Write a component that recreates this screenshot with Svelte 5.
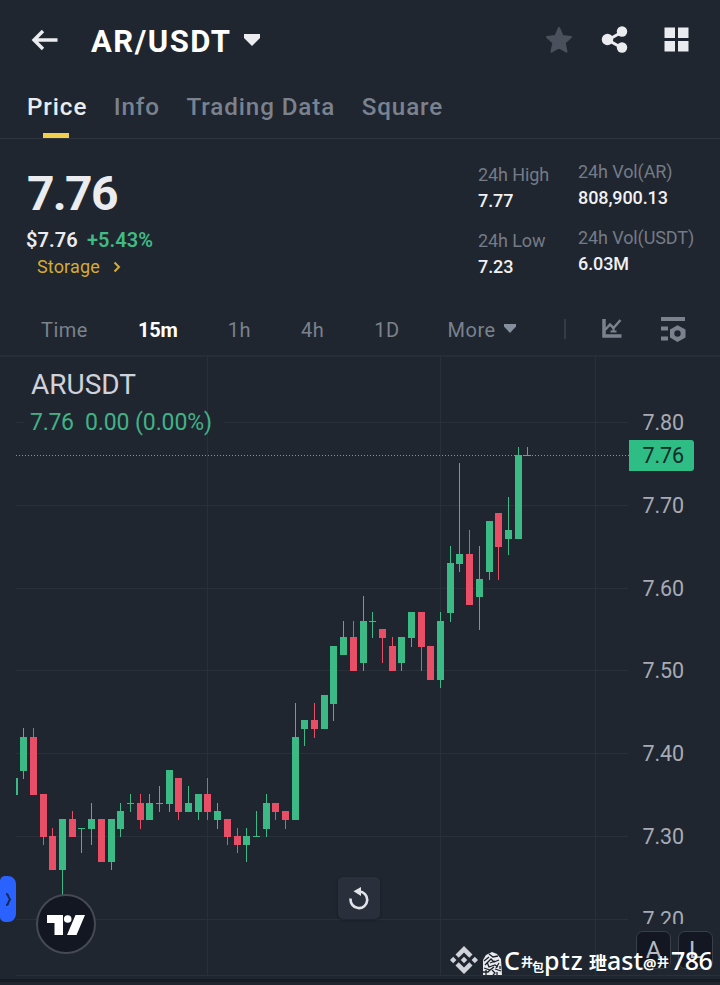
<script lang="ts">
  type Candle = [open: number, high: number, low: number, close: number];

  const tabs = ['Price', 'Info', 'Trading Data', 'Square'];
  const intervals = ['Time', '15m', '1h', '4h', '1D'];

  let activeTab = $state('Price');
  let activeInterval = $state('15m');

  const stats = [
    [
      { label: '24h High', value: '7.77' },
      { label: '24h Low', value: '7.23' },
    ],
    [
      { label: '24h Vol(AR)', value: '808,900.13' },
      { label: '24h Vol(USDT)', value: '6.03M' },
    ],
  ];

  // prices in cents
  const candles: Candle[] = [
    [735, 737, 735, 737], [738, 743, 737, 742], [742, 743, 735, 735], [735, 735, 729, 730],
    [730, 731, 726, 726], [726, 732, 723, 732], [732, 733, 730, 730], [731, 731, 728, 731],
    [731, 734, 729, 732], [732, 732, 727, 727], [727, 732, 726, 732], [731, 734, 730, 733],
    [734, 735, 733, 734], [734, 735, 731, 732], [732, 735, 732, 734], [734, 736, 733, 734],
    [734, 738, 733, 738], [737, 737, 732, 733], [733, 736, 733, 734], [733, 735, 732, 735],
    [735, 737, 732, 733], [732, 734, 731, 733], [732, 732, 729, 730], [730, 731, 728, 729],
    [729, 731, 727, 730], [730, 733, 730, 730], [731, 735, 730, 734], [734, 734, 732, 733],
    [733, 733, 731, 732], [732, 746, 732, 742], [743, 744, 741, 744], [744, 746, 742, 743],
    [743, 747, 743, 747], [746, 753, 744, 753], [752, 756, 752, 754], [754, 756, 750, 750],
    [751, 759, 750, 756], [756, 757, 754, 756], [755, 755, 751, 754], [753, 754, 750, 750],
    [751, 754, 750, 754], [754, 757, 753, 757], [757, 757, 750, 753], [753, 753, 749, 749],
    [749, 757, 748, 756], [757, 765, 756, 763], [763, 775, 762, 764], [764, 767, 758, 758],
    [759, 765, 755, 761], [762, 768, 761, 768], [769, 769, 761, 765], [766, 771, 764, 767],
    [766, 777, 766, 776], [776, 777, 776, 776],
  ];

  const gridPrices = [780, 770, 760, 750, 740, 730, 720];
  const timeLines = [207.5, 440.5, 595.5];

  // the chart starts at y = 357 on the page
  const yOf = (p: number) => Math.round(65.05 + (780 - p) * 8.276);

  const bars = candles.map(([open, high, low, close], i) => {
    const x = Math.round(13.6 + i * 9.692);
    const top = yOf(Math.max(open, close));
    const bottom = yOf(Math.min(open, close));
    return {
      x,
      top,
      height: bottom - top + 1,
      high: yOf(high),
      low: yOf(low) + (low < Math.min(open, close) ? 1 : 0),
      up: close >= open,
      doji: open === close,
    };
  });
</script>

<div class="screen">
  <header>
    <svg class="back" width="28" height="22" viewBox="0 0 28 22" fill="none" stroke="#eaecef" stroke-width="3.400">
      <path d="M12 2 3 11l9 9M3 11h23.500" />
    </svg>
    <h1>AR/USDT</h1>
    <svg class="caret" width="18" height="14" viewBox="0 0 18 14">
      <path d="M1 1h16v4L9 13 1 5z" fill="#eaecef" />
    </svg>
    <div class="actions">
      <svg width="28" height="28" viewBox="0 0 28 28">
        <path d="M14 2l3.500 8 8.500 1-6.300 5.800 1.800 8.900L14 21.400l-7.500 4.300 1.800-8.900L2 11l8.500-1z" fill="#4b515c" stroke="#4b515c" stroke-width="2" stroke-linejoin="round" />
      </svg>
      <svg width="28" height="28" viewBox="0 0 28 28" fill="#eaecef">
        <path d="M21 6 7 14l14 8" fill="none" stroke="#eaecef" stroke-width="3" />
        <circle cx="21" cy="5.500" r="5.200" />
        <circle cx="6.500" cy="13.500" r="5.700" />
        <circle cx="21" cy="21.500" r="5.200" />
      </svg>
      <svg width="26" height="26" viewBox="0 0 26 26" fill="#eaecef">
        <path d="M.5.500H11V11H.500zM14 .5h10.500V11H14zM.5 14H11v10.500H.500zM14 14h10.500v10.500H14z" />
      </svg>
    </div>
  </header>

  <nav class="tabs">
    {#each tabs as tab}
      <button class:active={activeTab === tab} onclick={() => (activeTab = tab)}>{tab}</button>
    {/each}
  </nav>

  <section class="summary">
    <div class="quote">
      <div class="price">7.76</div>
      <div class="change"><span>$7.76</span><span class="up">+5.43%</span></div>
      <div class="tag">
        <span>Storage</span>
        <svg width="8" height="12" viewBox="0 0 8 12" fill="none" stroke="#d5ab35" stroke-width="2">
          <path d="M1.500 1.500 6 6l-4.500 4.500" />
        </svg>
      </div>
    </div>
    {#each stats as column}
      <dl>
        {#each column as stat}
          <dt>{stat.label}</dt>
          <dd>{stat.value}</dd>
        {/each}
      </dl>
    {/each}
  </section>

  <nav class="intervals">
    {#each intervals as interval}
      <button class:active={activeInterval === interval} onclick={() => (activeInterval = interval)}>{interval}</button>
    {/each}
    <button class="more">
      More
      <svg width="12" height="9" viewBox="0 0 12 9"><path d="M0 0h12v2.500L6 9 0 2.500z" fill="#848e9c" /></svg>
    </button>
    <i class="divider"></i>
    <svg class="draw" width="22" height="22" viewBox="0 0 22 22" fill="none" stroke="#7b828d">
      <path d="M3 1v17h17.500" stroke-width="3.500" />
      <path d="M4 12l5-5.500 3.500 3.500 7-8" stroke-width="2.500" />
      <path d="M12.500 9v5M9.500 13.500h6" stroke-width="2" />
    </svg>
    <svg class="settings" width="26" height="26" viewBox="0 0 26 26" fill="#7b828d">
      <path d="M1 1h24v4H1zM1 10.500h7v4H1zM1 20.500h7v4H1z" />
      <path fill-rule="evenodd" d="M17.500 9.300l8 4.200v8l-8 4.500-7.500-4.500v-8zM17.500 14.300a3.200 3.200 0 1 0 0 6.400 3.200 3.200 0 0 0 0-6.400z" />
    </svg>
  </nav>

  <main>
    <svg class="chart" width="720" height="628" viewBox="0 0 720 628">
      <defs>
        <clipPath id="pane"><rect x="16" y="0" width="614" height="618" /></clipPath>
        <clipPath id="axis"><rect x="630" y="0" width="90" height="567" /></clipPath>
      </defs>
      <g class="grid">
        {#each gridPrices as p}
          <path d="M16 {yOf(p) + 0.5}H628" />
        {/each}
        {#each timeLines as x}
          <path d="M{x} 0V618" />
        {/each}
        <path d="M16 618.500H720" />
      </g>
      <rect class="legend-bg" x="24" y="52" width="200" height="26" />
      <path d="M207.500 50v30" class="grid-line" />

      <path class="last-line" d="M16 98.500H629" />
      <g clip-path="url(#pane)" shape-rendering="crispEdges">
        {#each bars as bar}
          <g class={bar.up ? 'up' : 'down'}>
            <rect x={bar.x} y={bar.high} width="1" height={bar.low - bar.high} />
            <rect x={bar.x - 3} y={bar.top} width="7" height={bar.doji ? 1 : bar.height} />
          </g>
        {/each}
      </g>

      <text class="symbol" x="31" y="37" textLength="105">ARUSDT</text>
      <text class="legend" x="30" y="73" textLength="44">7.76</text>
      <text class="legend" x="85" y="73" textLength="127">0.00 (0.00%)</text>

      <g class="axis" clip-path="url(#axis)">
        {#each gridPrices as p}
          <text x="642.5" y={yOf(p) + 7.5} textLength="41.500">{(p / 100).toFixed(2)}</text>
        {/each}
      </g>
      <path d="M629 83h62a3 3 0 0 1 3 3v25a3 3 0 0 1-3 3h-62z" fill="#2ebd85" />
      <text class="last" x="642.5" y="106" textLength="41.500">7.76</text>
      <path d="M0 623.500H720" stroke="#171c24" stroke-width="3" />
    </svg>

    <button class="drawer" aria-label="Expand">
      <svg width="7" height="13" viewBox="0 0 7 13" fill="none" stroke="#14295c" stroke-width="2"><path d="M1 1q2 0 2.500 3L5 6.500 3.500 9Q3 12 1 12" /></svg>
    </button>
    <div class="tv">
      <svg width="38" height="20" viewBox="0 0 38 20" fill="#fff">
        <path d="M0 0h16v20H7.500V8H0zM28.500 0H38l-8.500 20H20z" />
        <circle cx="20.700" cy="4" r="3.800" />
      </svg>
    </div>
    <button class="reset" aria-label="Reset chart">
      <svg width="20" height="24" viewBox="0 0 20 24">
        <path d="M1.700 12.500A8.300 8.300 0 1 0 10 5.500" fill="none" stroke="#e0e3e9" stroke-width="2.600" />
        <path d="M4.500 5.300 12 1v9z" fill="#e0e3e9" />
      </svg>
    </button>
    <div class="scale"><button>A</button><button>L</button></div>

    <div class="watermark">
      <svg class="mark" width="28" height="28" viewBox="0 0 28 28" fill="#d0d3da">
        <path d="M14 0l8.500 8.500-3.200 3.200L14 6.400l-5.300 5.300-3.200-3.200zM14 28l8.500-8.500-3.200-3.200L14 21.600l-5.300-5.300-3.200 3.200zM3.200 10.800 6.400 14l-3.200 3.200L0 14zM24.800 10.800 28 14l-3.200 3.200L21.600 14zM14 10.800l3.200 3.200-3.200 3.200-3.200-3.200z" />
      </svg>
      <svg class="avatar" width="20" height="23" viewBox="0 0 20 23">
        <path d="M1 23V8l3-5 6-3 5 2 4 5 1 16z" fill="#e8eaee" />
        <path d="M2 9l5-4M7 2l4 3 5-1M3 13l6-6 3 3 5-2M5 10l2 5 6-2 3 2M2 16l6 2 4-3M8 11l5-2M13 17l6 2M1 20h5l2-2M4 18v5M10 18l3 3-2 2M15 20v3M17 11l-3 5M18 14v3" fill="none" stroke="#1b212a" stroke-width="1.300" />
      </svg>
      <span class="c">C</span><span class="g">井</span><span class="g low">包</span><span class="pt">ptz</span><span class="g wide">玴</span><span class="ast">ast</span><span class="g at">@</span><span class="g">井</span><span class="num">786</span>
    </div>
  </main>
</div>

<style>
  :global(body) {
    background: #1f262f;
  }

  .screen {
    width: 720px;
    height: 985px;
    overflow: hidden;
    display: flex;
    flex-direction: column;
    background: #1f262f;
    color: #eaecef;
    font-family: Roboto, 'Noto Sans', sans-serif;
  }

  button {
    padding: 0;
    border: 0;
    background: none;
    color: inherit;
    font: inherit;
    letter-spacing: inherit;
    cursor: pointer;
  }

  header {
    display: flex;
    align-items: center;
    height: 80px;
    padding: 0 30px 0 31px;
  }

  h1 {
    margin: 4px 0 0 32px;
    width: 140px;
    font-size: 31px;
    font-weight: 700;
    letter-spacing: 1.5px;
    white-space: nowrap;
    color: #fff;
  }

  .caret {
    margin-left: 12px;
    width: 18px;
  }

  .actions {
    display: flex;
    align-items: center;
    margin-left: auto;
  }

  .actions svg + svg {
    margin-left: 28px;
  }

  .actions svg + svg + svg {
    margin-left: 35px;
  }

  .tabs {
    display: flex;
    gap: 26.5px;
    height: 58px;
    padding-left: 27px;
    border-bottom: 1px solid #2e353f;
    font-size: 24.2px;
    font-weight: 500;
    letter-spacing: 0.9px;
    color: #7b828f;
  }

  .tabs button {
    position: relative;
    padding-bottom: 4px;
    white-space: nowrap;
  }

  .tabs .active {
    color: #eaecef;
  }

  .tabs .active::after {
    content: '';
    position: absolute;
    left: 16px;
    bottom: 0;
    width: 26px;
    height: 5px;
    background: #f0cf4e;
  }

  .summary {
    display: flex;
    height: 163px;
  }

  .quote {
    width: 451px;
    padding-left: 27px;
  }

  .price {
    height: 61px;
    margin-top: 25px;
    font-size: 48px;
    font-weight: 700;
    line-height: 60px;
    letter-spacing: -1.7px;
  }

  .change {
    display: flex;
    gap: 9px;
    height: 31px;
    margin-left: -1px;
    font-size: 20px;
    font-weight: 600;
    line-height: 31px;
    letter-spacing: 0.1px;
  }

  .up {
    color: #3fbb85;
    fill: #3cba86;
  }

  .down {
    fill: #e84e66;
  }

  .tag {
    display: flex;
    align-items: center;
    gap: 13px;
    padding-left: 10px;
    color: #d5ab35;
    font-size: 18px;
    line-height: 22px;
    letter-spacing: 0.15px;
  }

  dl {
    margin: 22px 0 0;
    width: 100px;
    font-size: 18px;
    white-space: nowrap;
  }

  dl:last-child {
    margin-top: 19px;
  }

  dt {
    height: 28px;
    line-height: 28px;
    color: #747b87;
    letter-spacing: -0.1px;
  }

  dd {
    height: 24px;
    margin: 0 0 14px;
    line-height: 24px;
    font-weight: 500;
    color: #f0f1f4;
    letter-spacing: -0.1px;
  }

  .intervals {
    display: flex;
    align-items: center;
    height: 54px;
    padding-left: 41px;
    border-bottom: 2px solid #262d37;
    font-size: 20px;
    letter-spacing: 0.5px;
    color: #7b828d;
  }

  .intervals button {
    margin-right: 50px;
    padding-top: 3px;
  }

  .intervals .active {
    color: #fff;
    font-weight: 700;
    letter-spacing: -0.2px;
  }

  .intervals .more {
    display: flex;
    align-items: center;
    gap: 8px;
    width: 70px;
    margin: 0 46px 0 -2px;
  }

  .more svg {
    margin-top: -3px;
  }

  .divider {
    width: 2px;
    height: 20px;
    margin-top: 2px;
    background: #343b46;
  }

  .draw {
    margin: 2px 0 0 35px;
  }

  .settings {
    margin: 1px 0 0 37px;
  }

  main {
    position: relative;
    flex: 1;
  }

  .chart {
    display: block;
  }

  .grid,
  .grid-line {
    stroke: #29303a;
  }

  .legend-bg {
    fill: #1f262f;
  }

  .last-line {
    stroke: #5fa794;
    stroke-dasharray: 1 2;
  }

  .symbol {
    font-size: 28px;
    fill: #cfd2da;
  }

  .legend {
    font-size: 23px;
    fill: #41b287;
  }

  .axis {
    font-size: 21.5px;
    fill: #a7aab4;
  }

  .last {
    font-size: 21.5px;
    fill: #102c28;
  }

  .drawer {
    position: absolute;
    left: 0;
    top: 519px;
    display: flex;
    align-items: center;
    justify-content: center;
    width: 16px;
    height: 46px;
    border-radius: 5px 8px 8px 5px;
    background: #2962ff;
  }

  .tv {
    position: absolute;
    left: 36px;
    top: 537px;
    box-sizing: border-box;
    display: flex;
    align-items: center;
    justify-content: center;
    width: 60px;
    height: 60px;
    padding-top: 2px;
    border: 2px solid #454952;
    border-radius: 50%;
    background: #131722;
  }

  .reset {
    position: absolute;
    left: 338px;
    top: 520px;
    display: flex;
    align-items: center;
    justify-content: center;
    width: 42px;
    height: 42px;
    border-radius: 5px;
    background: #2a303b;
    box-shadow: 0 1px 3px rgba(0, 0, 0, 0.3);
  }

  .scale {
    position: absolute;
    left: 636px;
    top: 574px;
    display: flex;
    gap: 7px;
  }

  .scale button {
    box-sizing: border-box;
    width: 35px;
    height: 38px;
    border: 1px solid #3a3e49;
    border-radius: 7px;
    background: #131722;
    color: #b8bbc4;
    font-size: 24px;
  }

  .watermark {
    position: absolute;
    left: 450px;
    top: 587px;
    display: flex;
    align-items: center;
    height: 32px;
    white-space: nowrap;
    font-family: 'Noto Sans', 'Noto Sans CJK SC', sans-serif;
    font-size: 25px;
    font-weight: 500;
    color: #fff;
  }

  .avatar {
    margin: 6px 2px 0 4px;
  }

  .c {
    width: 17px;
  }

  .g {
    width: 11px;
    font-size: 12px;
    font-weight: 700;
    line-height: 16px;
    padding-top: 5px;
  }

  .low {
    width: 12px;
    padding-top: 15px;
  }

  .pt {
    width: 38px;
    letter-spacing: 0.8px;
  }

  .wide {
    width: 18px;
    margin-left: 7px;
    font-size: 18px;
  }

  .ast {
    width: 36px;
  }

  .at {
    width: 14px;
    font-size: 15px;
  }

  .num {
    margin-left: 3px;
    letter-spacing: -0.5px;
  }
</style>
